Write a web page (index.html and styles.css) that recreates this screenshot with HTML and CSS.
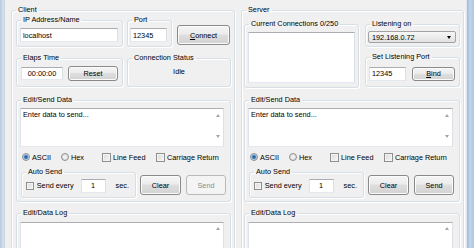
FILE: index.html
```html
<!DOCTYPE html>
<html lang="en">
<head>
    <meta charset="UTF-8">
    <meta name="viewport" content="width=device-width, initial-scale=1.0">
    <title>TCP Client / Server</title>
    <link rel="stylesheet" href="styles.css">
</head>
<body>
<div class="window">
    <div class="edge-left"></div>
    <div class="form">
        <!-- Client side -->
        <fieldset class="group client">
            <legend>Client</legend>
            <div class="gb client-body">
                <div class="row row-top">
                    <fieldset class="group ip">
                        <legend>IP Address/Name</legend>
                        <div class="gb ip-body">
                            <div class="textbox">localhost</div>
                        </div>
                    </fieldset>
                    <fieldset class="group port">
                        <legend>Port</legend>
                        <div class="gb port-body">
                            <div class="textbox">12345</div>
                        </div>
                    </fieldset>
                    <button class="btn connect"><u>C</u>onnect</button>
                </div>
                <div class="row row-status">
                    <fieldset class="group elaps">
                        <legend>Elaps Time</legend>
                        <div class="gb elaps-body">
                            <div class="textbox time">00:00:00</div>
                            <button class="btn reset">Reset</button>
                        </div>
                    </fieldset>
                    <fieldset class="group status">
                        <legend>Connection Status</legend>
                        <div class="gb status-body">Idle</div>
                    </fieldset>
                </div>
                <fieldset class="group send-data">
                    <legend>Edit/Send Data</legend>
                    <div class="gb send-body">
                        <div class="textbox memo">
                            <span class="memo-text">Enter data to send...</span>
                            <span class="vscroll"><i class="arrow-up"></i><i class="arrow-down"></i></span>
                        </div>
                        <div class="options">
                            <span class="opt opt-ascii"><span class="radio checked"></span>ASCII</span>
                            <span class="opt opt-hex"><span class="radio"></span>Hex</span>
                            <span class="opt opt-lf"><span class="check"></span>Line Feed</span>
                            <span class="opt"><span class="check"></span>Carriage Return</span>
                        </div>
                        <div class="send-row">
                            <fieldset class="group auto">
                                <legend>Auto Send</legend>
                                <div class="gb auto-body">
                                    <span class="check"></span>
                                    <span class="every">Send every</span>
                                    <div class="textbox interval">1</div>
                                    <span class="sec">sec.</span>
                                </div>
                            </fieldset>
                            <button class="btn clear">Clear</button>
                            <button class="btn send" disabled>Send</button>
                        </div>
                    </div>
                </fieldset>
                <fieldset class="group log">
                    <legend>Edit/Data Log</legend>
                    <div class="gb log-body">
                        <div class="textbox memo memo-log">
                            <span class="memo-text"></span>
                            <span class="vscroll"><i class="arrow-up"></i></span>
                        </div>
                    </div>
                </fieldset>
            </div>
        </fieldset>

        <!-- Server side -->
        <fieldset class="group server">
            <legend>Server</legend>
            <div class="gb server-body">
                <div class="row row-server">
                    <fieldset class="group connections">
                        <legend>Current Connections 0/250</legend>
                        <div class="gb conn-body">
                            <div class="textbox listbox"></div>
                        </div>
                    </fieldset>
                    <div class="side">
                        <fieldset class="group listening">
                            <legend>Listening on</legend>
                            <div class="gb listen-body">
                                <div class="combo">
                                    <span>192.168.0.72</span>
                                    <i class="arrow-drop"></i>
                                </div>
                            </div>
                        </fieldset>
                        <fieldset class="group listen-port">
                            <legend>Set Listening Port</legend>
                            <div class="gb lport-body">
                                <div class="textbox lport">12345</div>
                                <button class="btn bind"><u>B</u>ind</button>
                            </div>
                        </fieldset>
                    </div>
                </div>
                <fieldset class="group send-data send-server">
                    <legend>Edit/Send Data</legend>
                    <div class="gb send-body">
                        <div class="textbox memo">
                            <span class="memo-text">Enter data to send...</span>
                            <span class="vscroll"><i class="arrow-up"></i><i class="arrow-down"></i></span>
                        </div>
                        <div class="options">
                            <span class="opt opt-ascii"><span class="radio checked"></span>ASCII</span>
                            <span class="opt opt-hex"><span class="radio"></span>Hex</span>
                            <span class="opt opt-lf"><span class="check"></span>Line Feed</span>
                            <span class="opt"><span class="check"></span>Carriage Return</span>
                        </div>
                        <div class="send-row">
                            <fieldset class="group auto">
                                <legend>Auto Send</legend>
                                <div class="gb auto-body">
                                    <span class="check"></span>
                                    <span class="every">Send every</span>
                                    <div class="textbox interval">1</div>
                                    <span class="sec">sec.</span>
                                </div>
                            </fieldset>
                            <button class="btn clear">Clear</button>
                            <button class="btn send">Send</button>
                        </div>
                    </div>
                </fieldset>
                <fieldset class="group log">
                    <legend>Edit/Data Log</legend>
                    <div class="gb log-body">
                        <div class="textbox memo memo-log">
                            <span class="memo-text"></span>
                            <span class="vscroll"><i class="arrow-up"></i></span>
                        </div>
                    </div>
                </fieldset>
            </div>
        </fieldset>
    </div>
    <div class="edge-right"></div>
</div>
</body>
</html>
```

FILE: styles.css
```css
body {
    margin: 0;
    background-color: #f0f0f0;
    font-family: "Liberation Sans", Arial, sans-serif;
    font-size: 7.3px;
    color: #000;
    overflow: hidden;
}
.window {
    display: flex;
    width: 474px;
    height: 248px;
    overflow: hidden;
}
.edge-left {
    width: 5px;
    background: linear-gradient(to right, #b6cade, #cbd9e8 60%, #dde6ef);
    border-right: 1px solid #c9d1da;
    box-sizing: border-box;
}
.edge-right {
    width: 8px;
    background: linear-gradient(to right, #dfe7ef 0, #dfe7ef 1px, #9fbbd9 1px, #c2d6ec 50%, #aec7e2 100%);
}
.form {
    flex: 1;
    display: flex;
    align-items: flex-start;
    padding: 5px 0 0 6px;
    gap: 6px;
}

/* group boxes */
.group {
    margin: 0;
    padding: 0;
    min-width: 0;
    box-sizing: border-box;
    border: 1px solid #d5dfe5;
    border-radius: 3px;
    box-shadow: inset 1px 1px #fff, 1px 1px #fff;
}
.group legend {
    margin-left: 4px;
    padding: 0 2px;
    line-height: 10px;
    height: 10px;
}
.client { width: 224px; height: 260px; }
.server { width: 223px; height: 260px; }
.client-body { padding: 0 3px 0 4px; }
.server-body { padding: 0 3px 0 2px; }

.row { display: flex; }
.row-top { align-items: flex-start; }
.row-status { margin-top: 6px; }

.ip { width: 107px; }
.ip-body { padding: 3px 4px 4px 3px; }
.port { width: 45px; margin-left: 4px; }
.port-body { padding: 3px 4px 4px 2px; }

.elaps { width: 107px; }
.elaps-body {
    display: flex;
    align-items: center;
    height: 15px;
    padding: 3px 0 5px 4px;
}
.status { width: 104px; margin-left: 4px; }
.status-body {
    text-align: center;
    line-height: 12px;
    padding-top: 3px;
}

/* controls */
.textbox {
    box-sizing: border-box;
    height: 14px;
    display: flex;
    align-items: center;
    padding: 0 2px;
    background: #fff;
    border: 1px solid;
    border-color: #abadb3 #dbdfe6 #e3e9ef #e2e3ea;
    white-space: nowrap;
}
.time {
    width: 42px;
    height: 13px;
    justify-content: center;
}
.btn {
    box-sizing: border-box;
    font: inherit;
    color: #000;
    padding: 0;
    border: 1px solid #8a8a8a;
    border-radius: 3px;
    background: linear-gradient(#f5f5f5 0, #ececec 45%, #dedede 50%, #d2d2d2 100%);
    box-shadow: inset 0 0 0 1px #fbfbfb;
}
.btn:disabled {
    color: #8c8c8c;
    border-color: #b7babc;
    background: #f4f4f4;
    box-shadow: none;
}
.connect {
    width: 53px;
    height: 20px;
    margin: 10px 0 0 5px;
}
.reset {
    width: 50px;
    height: 15px;
    margin-left: 5px;
}

/* send data */
.send-data { margin-top: 8px; }
.send-server { margin-top: 7px; }
.send-body { padding: 3px 4px 3px 3px; }
.memo {
    height: 39px;
    margin-right: 2px;
    align-items: stretch;
    padding: 0;
}
.memo-text {
    flex: 1;
    padding: 1px 2px;
}
.vscroll {
    width: 10px;
    display: flex;
    flex-direction: column;
    justify-content: space-between;
    align-items: center;
    padding: 5px 0 8px;
}
.arrow-up {
    border-left: 2px solid transparent;
    border-right: 2px solid transparent;
    border-bottom: 3px solid #a5a5a5;
}
.arrow-down {
    border-left: 2px solid transparent;
    border-right: 2px solid transparent;
    border-top: 3px solid #a5a5a5;
}
.options {
    display: flex;
    align-items: center;
    height: 20px;
    padding-left: 2px;
}
.opt {
    display: flex;
    align-items: center;
}
.opt-ascii { width: 39px; }
.opt-hex { width: 41px; }
.opt-lf { width: 54px; }
.radio {
    box-sizing: border-box;
    width: 8px;
    height: 8px;
    margin-right: 2px;
    border: 1px solid #8f8f8f;
    border-radius: 50%;
    background: radial-gradient(circle, #f6f6f6, #d6d6d6);
}
.radio.checked {
    background: radial-gradient(circle, #1e4f7e 0, #3f7fbf 1.5px, #a9c9e6 2.5px, #e9eef3 3.5px);
}
.check {
    box-sizing: border-box;
    width: 9px;
    height: 9px;
    margin-right: 2px;
    border: 1px solid #8f8f8f;
    background: linear-gradient(135deg, #d9d9d9, #f7f7f7);
    box-shadow: inset 0 0 0 1px #f4f4f4;
}
.send-row {
    display: flex;
    align-items: flex-start;
}
.auto { width: 115px; margin-left: 1px; }
.auto-body {
    display: flex;
    align-items: center;
    height: 15px;
    padding: 1px 6px 4px 4px;
}
.auto-body .check { width: 8px; height: 8px; margin-right: 3px; }
.every { width: 46px; }
.interval {
    width: 26px;
    justify-content: center;
}
.sec { margin-left: 10px; }
.clear {
    width: 41px;
    height: 20px;
    margin: 8px 0 0 4px;
}
.send {
    width: 40px;
    height: 20px;
    margin: 8px 0 0 5px;
}

/* log */
.log { margin-top: 6px; }
.log-body { padding: 4px 4px 0 3px; }
.memo-log { height: 60px; }
.memo-log .vscroll { justify-content: flex-start; padding-top: 4px; }

/* server */
.row-server { margin-top: 4px; }
.connections { width: 115px; }
.conn-body { padding: 3px 3px 4px 3px; }
.listbox { height: 51px; }
.side { width: 95px; margin-left: 6px; }
.listen-body { padding: 2px 3px 3px 2px; }
.combo {
    box-sizing: border-box;
    height: 12px;
    display: flex;
    align-items: center;
    justify-content: space-between;
    padding: 0 4px 0 3px;
    border: 1px solid #a3a3a3;
    border-radius: 2px;
    background: linear-gradient(#f7f7f7, #ececec 50%, #e1e1e1);
}
.arrow-drop {
    border-left: 2.5px solid transparent;
    border-right: 2.5px solid transparent;
    border-top: 3px solid #000;
}
.listen-port { margin-top: 5px; }
.lport-body {
    display: flex;
    align-items: center;
    height: 15px;
    padding: 4px 0 5px 3px;
}
.lport { width: 37px; }
.bind {
    width: 43px;
    height: 14px;
    margin-left: 6px;
}
```
